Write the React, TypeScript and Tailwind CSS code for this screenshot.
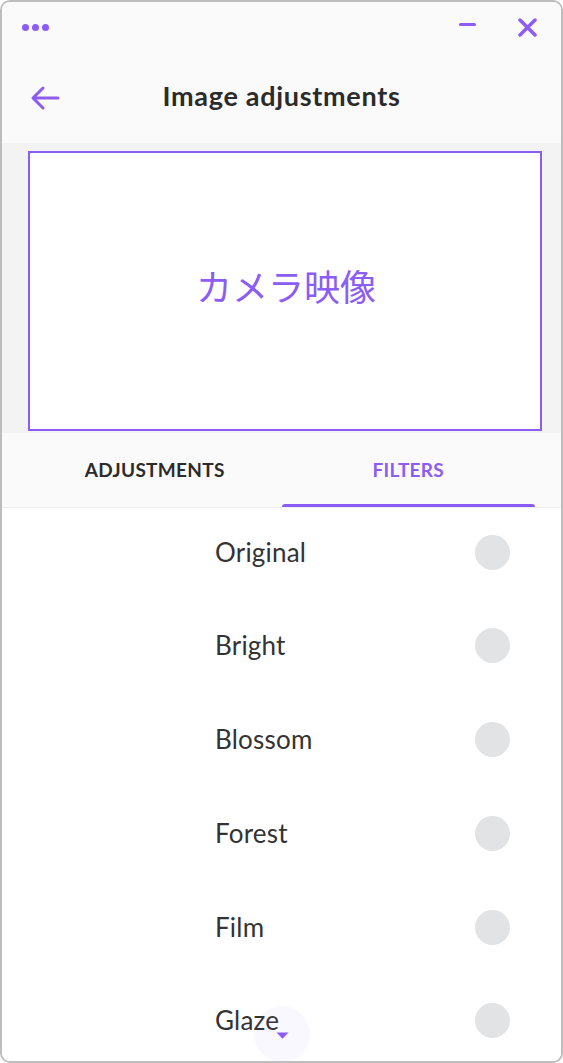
import { useState } from "react";

const filters = ["Original", "Bright", "Blossom", "Forest", "Film", "Glaze"];

export default function App() {
  const [tab] = useState("filters");

  return (
    <div className="w-[563px] h-[1063px] bg-white font-['Lato','Noto_Sans',sans-serif]">
      <div className="relative flex flex-col h-full border-2 border-[#bdbdbd] rounded-[10px] overflow-hidden bg-white">
        {/* header */}
        <div className="shrink-0 bg-[#fafafa]">
          <div className="flex items-center justify-between h-[50px] pl-[20px] pr-[24px]">
            <div className="flex gap-[3px]">
              <span className="w-[7px] h-[7px] rounded-full bg-[#8b5cf6]" />
              <span className="w-[7px] h-[7px] rounded-full bg-[#8b5cf6]" />
              <span className="w-[7px] h-[7px] rounded-full bg-[#8b5cf6]" />
            </div>
            <div className="flex items-center gap-[42px]">
              <span className="w-[17px] h-[3px] rounded-sm bg-[#8b5cf6] mb-[6px]" />
              <svg width="19" height="19" viewBox="0 0 19 19">
                <path d="M2 2 L17 17 M17 2 L2 17" stroke="#8b5cf6" strokeWidth="3.5" strokeLinecap="round" />
              </svg>
            </div>
          </div>
          <div className="grid grid-cols-[1fr_auto_1fr] items-center h-[91px]">
            <div className="pl-[28px]">
              <svg width="30" height="26" viewBox="0 0 30 26">
                <path d="M28 13 H4 M13 3 L3 13 L13 23" fill="none" stroke="#8b5cf6" strokeWidth="3" strokeLinecap="round" strokeLinejoin="round" />
              </svg>
            </div>
            <h1 className="text-[27px] font-bold text-[#2b2b2b] tracking-[0.7px] pb-[2px]">Image adjustments</h1>
            <div />
          </div>
        </div>

        {/* camera preview */}
        <div className="shrink-0 h-[290px] bg-[#f3f3f3] pt-[8px] pb-[2px] pl-[26px] pr-[19px] flex">
          <div className="flex-1 flex items-center justify-center border-2 border-[#8b5cf6] bg-white">
            <span className="text-[36px] text-[#8b5cf6] font-['Noto_Sans_CJK_JP',sans-serif] font-normal pl-[2px] pb-[12px]">
              カメラ映像
            </span>
          </div>
        </div>

        {/* tabs */}
        <div className="shrink-0 grid grid-cols-2 h-[75px] px-[26px] bg-[#fafafa] border-b border-[#efefef]">
          <div className="flex items-center justify-center">
            <span className="text-[19px] font-bold text-[#2b2b2b] tracking-[0.3px]">ADJUSTMENTS</span>
          </div>
          <div className="relative flex items-center justify-center">
            <span className={"text-[19px] font-bold tracking-[0.3px] " + (tab === "filters" ? "text-[#8b5cf6]" : "text-[#2b2b2b]")}>
              FILTERS
            </span>
            <span className="absolute left-0 right-0 bottom-0 h-[3px] rounded-t-full bg-[#8b5cf6]" />
          </div>
        </div>

        {/* filter list */}
        <div className="flex-1 min-h-0 overflow-hidden bg-white pt-[22px]">
          {filters.map((f) => (
            <div key={f} className="flex items-start justify-between h-[93.8px] pl-[213px] pr-[51px]">
              <div className="flex items-center justify-between w-full h-[44px]">
                <span className="text-[26px] text-[#333333] tracking-[0.2px]">{f}</span>
                <span className="w-[35px] h-[35px] rounded-full bg-[#e2e3e5]" />
              </div>
            </div>
          ))}
        </div>

        {/* scroll down */}
        <button className="absolute left-[252px] top-[1004px] w-[56px] h-[56px] rounded-full bg-[#8b5cf6]/5 flex items-center justify-center pt-[2px]">
          <svg width="13" height="7" viewBox="0 0 13 7">
            <path d="M0.5 0.5 H12.5 L6.5 6.8 Z" fill="#8b5cf6" />
          </svg>
        </button>
      </div>
    </div>
  );
}
